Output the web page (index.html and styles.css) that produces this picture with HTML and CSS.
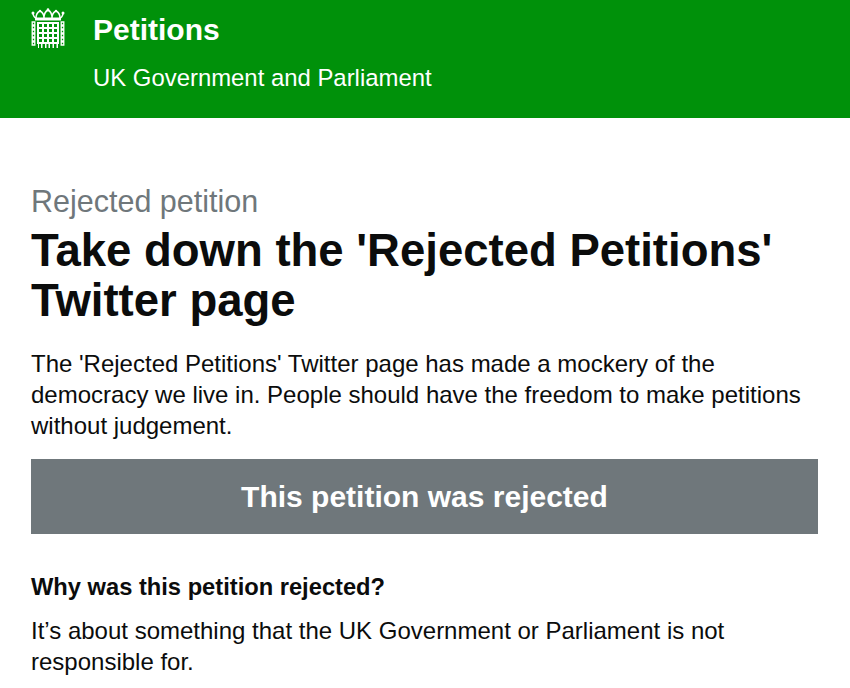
FILE: index.html
```html
<!DOCTYPE html>
<html lang="en">
<head>
<meta charset="utf-8">
<title>Petitions</title>
<link rel="stylesheet" href="styles.css">
</head>
<body>
<header class="site-header">
  <svg class="crest" viewBox="0 0 34 41" aria-hidden="true">
    <g fill="#fff">
      <circle cx="17" cy="1.500" r="1.300"/><circle cx="9" cy="3" r="1.200"/><circle cx="25" cy="3" r="1.200"/><circle cx="2" cy="5" r="1.500"/><circle cx="32" cy="5" r="1.500"/>
      <path d="M4 9.500h26v3H4z"/>
    </g>
    <path d="M2 5c0 3 2 5 3 5M5 10c0-3 2-6 4-7 2 1 4 3 4 7M13 10c0-4 2-7 4-8 2 1 4 4 4 8M21 10c0-4 2-6 4-7 2 1 4 4 4 7M32 5c0 3-2 5-3 5" fill="none" stroke="#fff" stroke-width="1.500"/>
    <g fill="none" stroke="#fff" stroke-width="1.300">
      <path d="M1.200 14h2.600v3H1.200zM1.200 18h2.600v3H1.200zM1.200 22h2.600v3H1.200zM1.200 26h2.600v3H1.200zM1.200 30h2.600v3H1.200zM1.200 34h2.600v3H1.200zM30.200 14h2.600v3h-2.600zM30.200 18h2.600v3h-2.600zM30.200 22h2.600v3h-2.600zM30.200 26h2.600v3h-2.600zM30.200 30h2.600v3h-2.600zM30.200 34h2.600v3h-2.600z"/>
    </g>
    <path fill="#fff" fill-rule="evenodd" d="M6 14h22v22h-1v4h-1.500v-4h-2.500v4h-1.500v-4h-2.500v4h-1.500v-4h-2v4h-1.500v-4h-2.500v4H10v-4H8v4H7v-4H6zM8 16v3h3v-3zM13 16v3h3v-3zM18 16v3h3v-3zM23 16v3h3v-3zM8 21v3h3v-3zM13 21v3h3v-3zM18 21v3h3v-3zM23 21v3h3v-3zM8 26v3h3v-3zM13 26v3h3v-3zM18 26v3h3v-3zM23 26v3h3v-3zM8 31v3h3v-3zM13 31v3h3v-3zM18 31v3h3v-3zM23 31v3h3v-3z"/>
  </svg>
  <div class="brand">
    <div class="brand-title">Petitions</div>
    <div class="brand-sub">UK Government and Parliament</div>
  </div>
</header>
<main class="content">
  <div class="kicker">Rejected petition</div>
  <h1 class="title">Take down the 'Rejected Petitions' Twitter page</h1>
  <p class="lede">The 'Rejected Petitions' Twitter page has made a mockery of the democracy we live in. People should have the freedom to make petitions without judgement.</p>
  <div class="banner">This petition was rejected</div>
  <h2 class="why">Why was this petition rejected?</h2>
  <p class="reason">It’s about something that the UK Government or Parliament is not responsible for.</p>
</main>
</body>
</html>
```
FILE: styles.css
```css
html, body { margin: 0; padding: 0; background: #fff; }
body { font-family: "Liberation Sans", Arial, sans-serif; color: #0b0c0c; overflow: hidden; }
.site-header { display: flex; gap: 28px; background: #00910a; height: 118px; padding: 8px 31px 0; box-sizing: border-box; color: #fff; }
.crest { flex: none; width: 34px; height: 41px; }
.brand-title { font-size: 30px; font-weight: 700; line-height: 44px; }
.brand-sub { font-size: 23.900px; line-height: 26px; margin-top: 13px; }
.content { padding: 65px 32px 0 31px; }
.kicker { font-size: 30.500px; line-height: 36px; color: #6f777b; }
.title { font-size: 45.500px; font-weight: 700; line-height: 50px; margin: 7px 0 22px; }
.lede { font-size: 24px; line-height: 31px; margin: 0 0 18px; }
.banner { background: #6f777b; color: #fff; font-size: 30px; font-weight: 700; text-align: center; height: 75px; line-height: 75px; }
.why { font-size: 23.700px; font-weight: 700; line-height: 30px; margin: 38px 0 13px; }
.reason { font-size: 24px; line-height: 31px; margin: 0; }
```
